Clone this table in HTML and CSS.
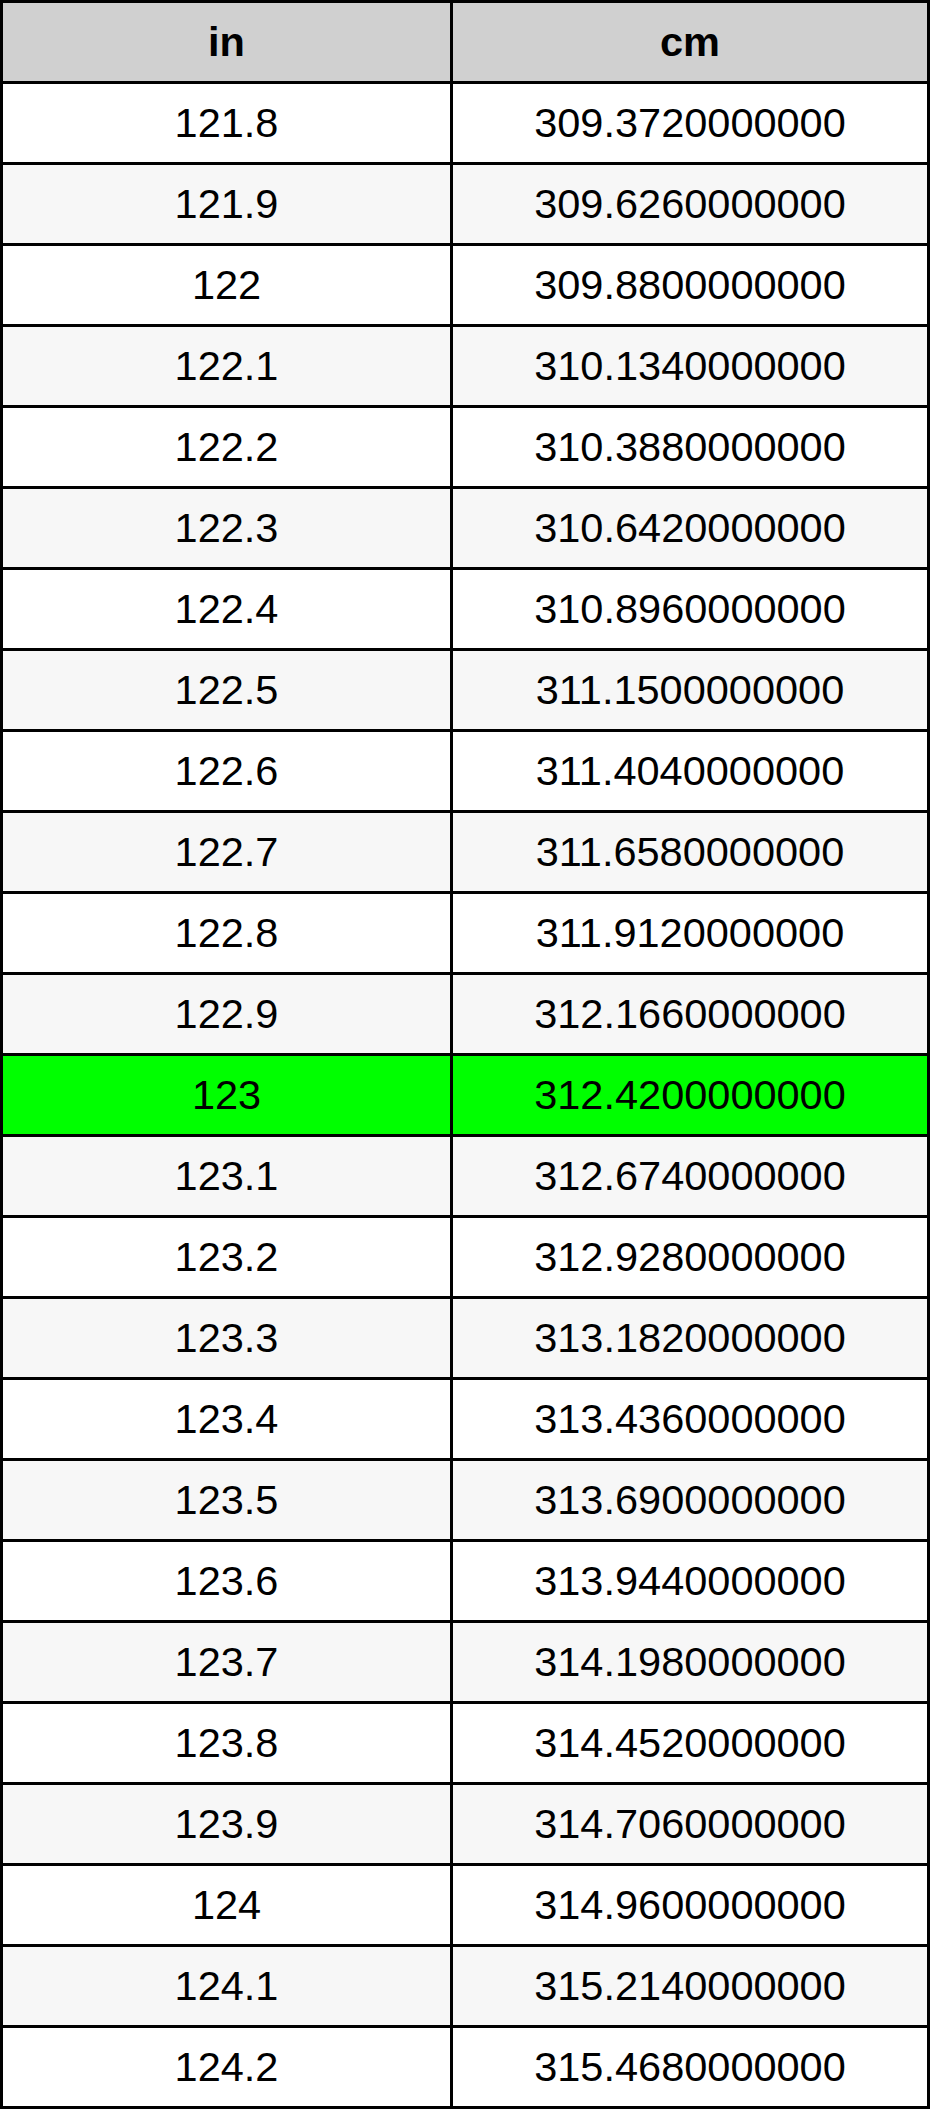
FILE: index.html
```html
<!DOCTYPE html>
<html>
<head>
<meta charset="utf-8">
<title>in to cm</title>
<link rel="stylesheet" href="styles.css">
</head>
<body>
<table class="conv">
<thead>
<tr><th class="c1">in</th><th class="c2">cm</th></tr>
</thead>
<tbody>
<tr><td>121.8</td><td>309.3720000000</td></tr>
<tr><td>121.9</td><td>309.6260000000</td></tr>
<tr><td>122</td><td>309.8800000000</td></tr>
<tr><td>122.1</td><td>310.1340000000</td></tr>
<tr><td>122.2</td><td>310.3880000000</td></tr>
<tr><td>122.3</td><td>310.6420000000</td></tr>
<tr><td>122.4</td><td>310.8960000000</td></tr>
<tr><td>122.5</td><td>311.1500000000</td></tr>
<tr><td>122.6</td><td>311.4040000000</td></tr>
<tr><td>122.7</td><td>311.6580000000</td></tr>
<tr><td>122.8</td><td>311.9120000000</td></tr>
<tr><td>122.9</td><td>312.1660000000</td></tr>
<tr class="hl"><td>123</td><td>312.4200000000</td></tr>
<tr><td>123.1</td><td>312.6740000000</td></tr>
<tr><td>123.2</td><td>312.9280000000</td></tr>
<tr><td>123.3</td><td>313.1820000000</td></tr>
<tr><td>123.4</td><td>313.4360000000</td></tr>
<tr><td>123.5</td><td>313.6900000000</td></tr>
<tr><td>123.6</td><td>313.9440000000</td></tr>
<tr><td>123.7</td><td>314.1980000000</td></tr>
<tr><td>123.8</td><td>314.4520000000</td></tr>
<tr><td>123.9</td><td>314.7060000000</td></tr>
<tr><td>124</td><td>314.9600000000</td></tr>
<tr><td>124.1</td><td>315.2140000000</td></tr>
<tr><td>124.2</td><td>315.4680000000</td></tr>
</tbody>
</table>
</body>
</html>
```

FILE: styles.css
```css
html, body {
  margin: 0;
  padding: 0;
  background: #ffffff;
}

.conv {
  width: 930px;
  table-layout: fixed;
  border-collapse: separate;
  border-spacing: 0;
  border-top: 3px solid #000;
  border-left: 3px solid #000;
  font-family: "Liberation Sans", Arial, sans-serif;
  font-size: 41.5px;
  color: #000;
}

.conv th,
.conv td {
  box-sizing: content-box;
  height: 78px;
  padding: 0;
  text-align: center;
  vertical-align: middle;
  border-right: 3px solid #000;
  border-bottom: 3px solid #000;
  line-height: 1;
}

.conv th {
  background: #d0d0d0;
  font-weight: bold;
}

.conv .c1 {
  width: 447px;
}

.conv tbody tr:nth-child(odd) td {
  background: #ffffff;
}

.conv tbody tr:nth-child(even) td {
  background: #f7f7f7;
}

.conv tbody tr.hl td {
  background: #00ff00;
}
```
